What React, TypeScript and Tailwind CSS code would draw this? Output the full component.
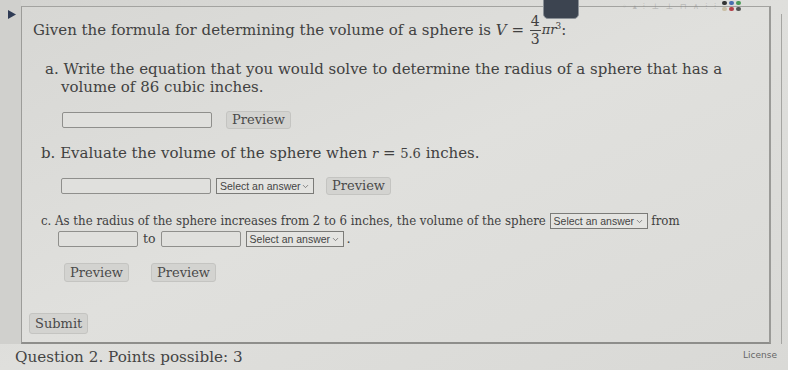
import { ChevronDown } from 'lucide-react';

const serif = { fontFamily: '"DejaVu Serif", "Liberation Serif", serif' };

function Box({ w }: { w: string }) {
  return <span className={`inline-block shrink-0 h-[16px] ${w} border border-[#8f8f8c] bg-[#e0e0dd] rounded-[2px]`} />;
}

function Select() {
  return (
    <span
      className="inline-flex shrink-0 whitespace-nowrap items-center h-[16px] w-[98px] border border-[#7b7b78] bg-[#e4e4e1] px-[3px] text-[10.5px] text-[#444] justify-between"
      style={{ fontFamily: '"Liberation Sans", Arial, sans-serif', fontStretch: 'normal' }}
    >
      <span>Select an answer</span>
      <ChevronDown size={9} strokeWidth={2} className="text-[#666]" />
    </span>
  );
}

function Preview({ label = 'Preview', h = 'h-[19px]' }: { label?: string; h?: string }) {
  return (
    <span className={`inline-flex shrink-0 items-center justify-center ${h} px-[5px] bg-[#d3d3d0] border border-[#c4c4c1] rounded-[3px] text-[13px] text-[#4a4a4a]`}>
      {label}
    </span>
  );
}

export default function App() {
  return (
    <div
      className="relative w-[788px] h-[370px] overflow-hidden bg-gradient-to-br from-[#d3d3d0] via-[#dfdfdc] to-[#d9d9d6] text-[#414141]"
      style={serif}
    >
      {/* darker margin on the left and right frame line */}
      <div className="absolute left-0 top-0 w-[21px] h-[344px] bg-[#d0d0cd]" />
      <div className="absolute left-[781px] top-[14px] w-[1px] h-[330px] bg-[#a5a5a2]" />

      {/* play marker */}
      <svg className="absolute left-[8px] top-[10px]" width="8" height="9" viewBox="0 0 8 9">
        <path d="M0 0 L8 4.5 L0 9 Z" fill="#2f3b55" />
      </svg>

      {/* main question panel */}
      <div className="absolute left-[21px] top-[6px] w-[750px] h-[338px] border-l border-t border-r-2 border-b-2 border-l-[#9c9c99] border-t-[#a3a3a0] border-r-[#9a9a97] border-b-[#8e8e8b] bg-gradient-to-br from-[#d7d7d4] via-[#e0e0dd] to-[#dbdbd8]">
        <div className="pl-[11px] pt-[6px] text-[15px] leading-[18px]">
          <div className="flex items-center h-[34px]">
            <span>Given the formula for determining the volume of a sphere is&nbsp;</span>
            <span className="italic">V</span>
            <span>&nbsp;=&nbsp;</span>
            <span className="inline-flex flex-col items-center text-[14px] leading-[17px] mx-[1px]">
              <span className="px-[1px] border-b border-[#444]">4</span>
              <span>3</span>
            </span>
            <span className="italic text-[13px]">πr</span>
            <sup className="text-[9px] -ml-[1px]">3</sup>
            <span>:</span>
          </div>

          <div className="mt-[13px] pl-[12px]">
            <div>a. Write the equation that you would solve to determine the radius of a sphere that has a</div>
            <div className="pl-[16px]">volume of 86 cubic inches.</div>
          </div>

          <div className="mt-[15px] pl-[29px] flex items-center gap-[14px]">
            <Box w="w-[150px]" />
            <Preview h="h-[18px]" />
          </div>

          <div className="mt-[15px] pl-[8px]">
            b. Evaluate the volume of the sphere when <span className="italic text-[13px]">r</span> = <span className="text-[13px]">5.6</span> inches.
          </div>

          <div className="mt-[14px] pl-[28px] flex items-center h-[18px]">
            <Box w="w-[150px]" />
            <span className="ml-[5px] flex"><Select /></span>
            <span className="ml-[12px] flex"><Preview h="h-[18px]" /></span>
          </div>

          <div
            className="mt-[17px] pl-[8px] text-[13.1px] flex items-center h-[18px] whitespace-nowrap"
            style={{ fontFamily: '"DejaVu Serif Condensed", "DejaVu Serif", serif', fontStretch: 'condensed' }}
          >
            <span>c. As the radius of the sphere increases from 2 to 6 inches, the volume of the sphere&nbsp;</span>
            <Select />
            <span>&nbsp;from</span>
          </div>
          <div className="pl-[25px] text-[13px] flex items-center h-[18px]">
            <Box w="w-[80px]" />
            <span className="mx-[5px] text-[12.5px]">to</span>
            <Box w="w-[80px]" />
            <span className="ml-[5px] flex"><Select /></span>
            <span className="ml-[3px]">.</span>
          </div>

          <div className="mt-[15px] pl-[31px] flex items-center gap-[22px]">
            <Preview />
            <Preview />
          </div>

          <div className="mt-[31px] -ml-[4px] flex">
            <Preview label="Submit" h="h-[21px]" />
          </div>
        </div>
      </div>

      {/* floating toolbar bits */}
      <div className="absolute left-[543px] top-[-6px] w-[36px] h-[25px] rounded-[5px] bg-[#3c4450] border border-[#8a9096]" />
      <div className="absolute left-[622px] top-[2px] h-[10px] flex items-center gap-[6px] opacity-40 text-[8px] leading-[10px] text-[#888]">
        <span>◦</span><span>▴</span><span className="tracking-[2px]">⁞ ⊥ ⊥ ⊓ ∧ ⁞ ⁞</span>
      </div>
      <div className="absolute left-[722px] top-[1px] grid grid-cols-3 gap-[2px]">
        <span className="w-[5px] h-[4px] rounded-full bg-[#333]" />
        <span className="w-[5px] h-[4px] rounded-full bg-[#4a6fb0]" />
        <span className="w-[5px] h-[4px] rounded-full bg-[#4c9b58]" />
        <span className="w-[5px] h-[4px] rounded-full bg-[#c9bfa6]" />
        <span className="w-[5px] h-[4px] rounded-full bg-[#b4424a]" />
        <span className="w-[5px] h-[4px] rounded-full bg-[#555]" />
      </div>

      {/* footer */}
      <div className="absolute left-[15px] top-[347px] text-[15.2px] leading-[20px] text-[#444]">Question 2. Points possible: 3</div>
      <div
        className="absolute right-[11px] top-[349px] text-[9px] text-[#666]"
        style={{ fontFamily: '"DejaVu Sans", sans-serif' }}
      >
        License
      </div>
    </div>
  );
}
